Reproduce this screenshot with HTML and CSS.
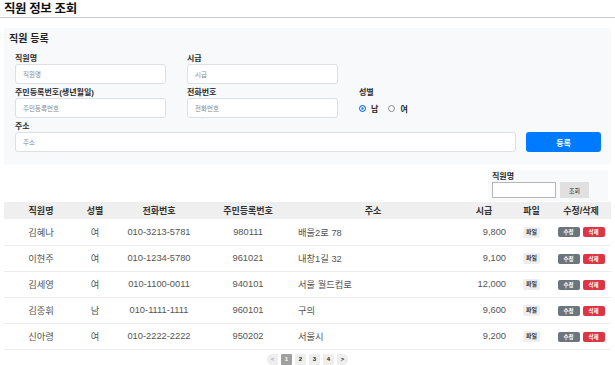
FILE: index.html
```html
<!DOCTYPE html>
<html lang="ko">
<head>
<meta charset="utf-8">
<title>직원 정보 조회</title>
<link rel="stylesheet" href="styles.css">
</head>
<body>
<div class="page">
  <h1 class="title">직원 정보 조회</h1>

  <section class="form-box">
    <h2 class="form-title">직원 등록</h2>
    <div class="fields">
      <div class="grid">
        <div class="field">
          <label class="lbl">직원명</label>
          <input class="inp" type="text" placeholder="직원명">
        </div>
        <div class="field">
          <label class="lbl">시급</label>
          <input class="inp" type="text" placeholder="시급">
        </div>
        <div class="field"></div>
        <div class="field">
          <label class="lbl">주민등록번호(생년월일)</label>
          <input class="inp" type="text" placeholder="주민등록번호">
        </div>
        <div class="field">
          <label class="lbl">전화번호</label>
          <input class="inp" type="text" placeholder="전화번호">
        </div>
        <div class="field">
          <label class="lbl">성별</label>
          <div class="radios">
            <label class="radio"><span class="dot on"></span>남</label>
            <label class="radio"><span class="dot"></span>여</label>
          </div>
        </div>
      </div>
      <div class="addr-row">
        <div class="field addr">
          <label class="lbl">주소</label>
          <input class="inp" type="text" placeholder="주소">
        </div>
        <button class="btn-reg">등록</button>
      </div>
    </div>
  </section>

  <div class="search-wrap">
    <div class="search">
      <label class="lbl">직원명</label>
      <div class="search-row">
        <input class="s-inp" type="text">
        <button class="s-btn">조회</button>
      </div>
    </div>
  </div>

  <table class="tbl">
    <colgroup>
      <col style="width:74px"><col style="width:34px"><col style="width:94px"><col style="width:84px">
      <col style="width:166px"><col style="width:56px"><col style="width:39px"><col style="width:60px">
    </colgroup>
    <thead>
      <tr><th>직원명</th><th>성별</th><th>전화번호</th><th>주민등록번호</th><th>주소</th><th>시급</th><th>파일</th><th>수정/삭제</th></tr>
    </thead>
    <tbody>
      <tr><td>김혜나</td><td>여</td><td>010-3213-5781</td><td>980111</td><td class="l">배울2로 78</td><td class="r">9,800</td><td><span class="badge">파일</span></td><td><span class="b-edit">수정</span><span class="b-del">삭제</span></td></tr>
      <tr><td>이현주</td><td>여</td><td>010-1234-5780</td><td>961021</td><td class="l">내창1길 32</td><td class="r">9,100</td><td><span class="badge">파일</span></td><td><span class="b-edit">수정</span><span class="b-del">삭제</span></td></tr>
      <tr><td>김세영</td><td>여</td><td>010-1100-0011</td><td>940101</td><td class="l">서울 월드컵로</td><td class="r">12,000</td><td><span class="badge">파일</span></td><td><span class="b-edit">수정</span><span class="b-del">삭제</span></td></tr>
      <tr><td>김중휘</td><td>남</td><td>010-1111-1111</td><td>960101</td><td class="l">구의</td><td class="r">9,600</td><td><span class="badge">파일</span></td><td><span class="b-edit">수정</span><span class="b-del">삭제</span></td></tr>
      <tr><td>신아령</td><td>여</td><td>010-2222-2222</td><td>950202</td><td class="l">서울시</td><td class="r">9,200</td><td><span class="badge">파일</span></td><td><span class="b-edit">수정</span><span class="b-del">삭제</span></td></tr>
    </tbody>
  </table>

  <nav class="pager">
    <span class="pg first dim">&lt;</span>
    <span class="pg active">1</span>
    <span class="pg">2</span>
    <span class="pg">3</span>
    <span class="pg">4</span>
    <span class="pg last">&gt;</span>
  </nav>
</div>
</body>
</html>
```

FILE: styles.css
```css
* { box-sizing: border-box; }
html, body { margin: 0; padding: 0; background: #fff; }
body {
  font-family: "Liberation Sans", "Noto Sans CJK KR", sans-serif;
  color: #222;
}
.page { padding: 0 4px; width: 615px; }

.title {
  margin: 0 -4px;
  padding: 1px 4px 0;
  font-size: 12.5px;
  line-height: 16px;
  font-weight: 700;
  letter-spacing: -0.4px;
  color: #111;
  border-bottom: 1px solid #c8c8c8;
}

.form-box {
  margin-top: 10px;
  background: #f8f9fa;
  border-radius: 3px;
  padding: 4px 5px 13px;
}
.form-title {
  margin: 0 0 8px;
  font-size: 10px;
  line-height: 14px;
  font-weight: 700;
  color: #222;
}
.fields { padding: 0 5px 0 6px; }
.grid {
  display: grid;
  grid-template-columns: 151px 151px auto;
  column-gap: 21px;
  row-gap: 4px;
}
.field { display: flex; flex-direction: column; }
.lbl {
  font-size: 8px;
  line-height: 10px;
  font-weight: 700;
  color: #2a2a2a;
}
.inp {
  height: 20px;
  border: 1px solid #dcdfe3;
  border-radius: 3px;
  background: #fff;
  padding: 0 7px;
  font-size: 6.5px;
  font-family: inherit;
  outline: none;
}
.inp::placeholder { color: #888; }

.radios {
  display: flex;
  align-items: center;
  height: 20px;
  gap: 10px;
}
.radio {
  display: flex;
  align-items: center;
  gap: 5px;
  font-size: 8px;
  font-weight: 700;
  color: #222;
}
.dot {
  width: 7px; height: 7px;
  border-radius: 50%;
  border: 1px solid #888;
  background: #fff;
}
.dot.on { border-color: #1a73e8; background: #1a73e8; box-shadow: inset 0 0 0 1.3px #fff; }

.addr-row {
  display: flex;
  align-items: flex-end;
  gap: 10px;
  margin-top: 4px;
}
.addr { flex: 1; }
.btn-reg {
  width: 75px;
  height: 20px;
  border: none;
  border-radius: 3px;
  background: #007bff;
  color: #fff;
  font-family: inherit;
  font-size: 8px;
  font-weight: 700;
  padding: 0;
}

.search-wrap { display: flex; justify-content: flex-end; margin-top: 5px; padding-right: 3px; }
.search {
  width: 120px;
  background: #f8f9fa;
  padding: 2px 4px 3px;
}
.search .lbl { display: block; }
.search-row { display: flex; gap: 4px; }
.s-inp {
  width: 64px;
  height: 16px;
  border: 1px solid #b5b5b5;
  background: #fff;
  padding: 0 3px;
  outline: none;
}
.s-btn {
  width: 29px;
  height: 16px;
  border: none;
  background: #e0e0e0;
  color: #222;
  font-family: inherit;
  font-size: 6px;
  padding: 0;
}

.tbl {
  width: 607px;
  margin-top: 1px;
  border-collapse: collapse;
  table-layout: fixed;
  font-size: 9.3px;
}
.tbl th {
  height: 17px;
  background: #efefef;
  color: #333;
  font-weight: 700;
  text-align: center;
  padding: 0;
  font-size: 9px;
}
.tbl td {
  height: 26px;
  border-bottom: 1px solid #eeeeee;
  color: #555;
  text-align: center;
  padding: 0;
}
.tbl td.l { text-align: left; padding-left: 8px; }
.tbl td.r { text-align: right; padding-right: 6px; }

.badge {
  display: inline-block;
  background: #eeeeee;
  color: #333;
  font-size: 6px;
  font-weight: 700;
  line-height: 11px;
  padding: 0 3px;
  border-radius: 2px;
}
.b-edit, .b-del {
  display: inline-block;
  width: 22px;
  line-height: 10px;
  font-size: 5.5px;
  font-weight: 700;
  color: #fff;
  border-radius: 2px;
  text-align: center;
}
.b-edit { background: #6c757d; margin-right: 3px; }
.b-del { background: #dc3545; }

.pager {
  display: flex;
  justify-content: center;
  gap: 3px;
  margin-top: 4px;
}
.pg {
  width: 11px;
  height: 11px;
  background: #eeeeee;
  color: #222;
  font-size: 6px;
  font-weight: 700;
  line-height: 11px;
  text-align: center;
  border-radius: 1px;
}
.pg.dim { color: #aaa; }
.pg.first { border-radius: 5px 1px 1px 5px; }
.pg.last { border-radius: 1px 5px 5px 1px; }
.pg.active { background: #a0a0a0; color: #fff; }
```
